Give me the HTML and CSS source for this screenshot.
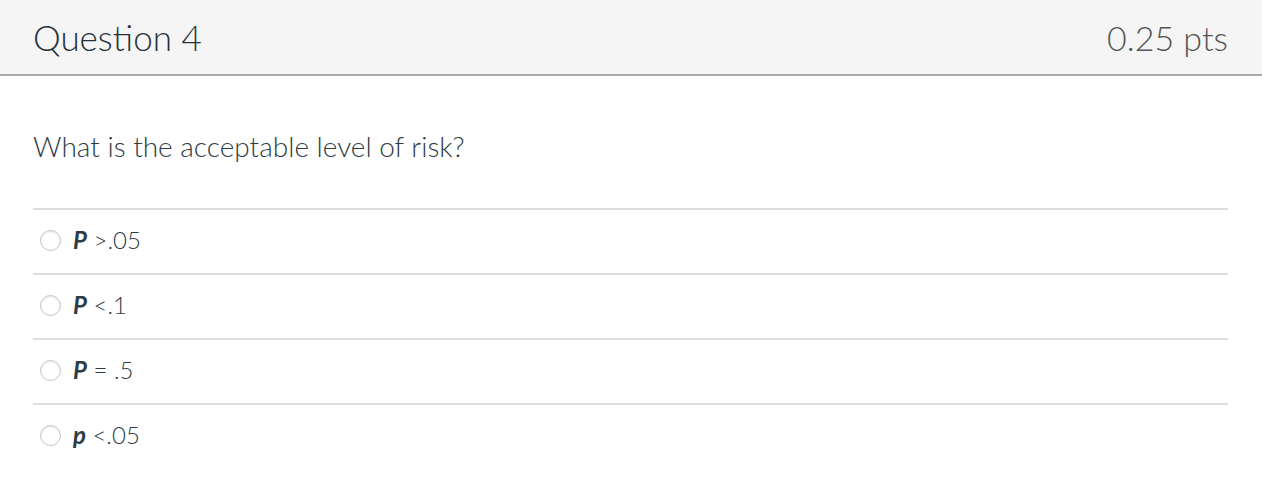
FILE: index.html
```html
<!DOCTYPE html>
<html>
<head>
    <title>Question 4</title>
    <link rel="stylesheet" href="styles.css">
</head>
<body>
    <div class="question">
        <div class="question-header">
            <span class="question-name">Question 4</span>
            <span class="points">0.25 pts</span>
        </div>
        <div class="question-text">What is the acceptable level of risk?</div>
        <div class="answers">
            <label class="answer">
                <span class="radio"></span>
                <span class="answer-text"><b><i>P</i></b> &gt;.05</span>
            </label>
            <label class="answer">
                <span class="radio"></span>
                <span class="answer-text"><b><i>P</i></b> &lt;.1</span>
            </label>
            <label class="answer">
                <span class="radio"></span>
                <span class="answer-text"><b><i>P</i></b> = .5</span>
            </label>
            <label class="answer">
                <span class="radio"></span>
                <span class="answer-text"><b><i>p</i></b> &lt;.05</span>
            </label>
        </div>
    </div>
</body>
</html>
```

FILE: styles.css
```css
body {
    margin: 0;
    background: #fff;
    font-family: "Lato Light", Lato, "Open Sans", sans-serif;
    font-weight: 300;
    color: #2d3b45;
}

.question-header {
    display: flex;
    align-items: center;
    justify-content: space-between;
    height: 74px;
    padding: 0 34px 0 33px;
    background-color: #f5f5f5;
    border-bottom: 2px solid #aaa;
}

.question-name {
    font-size: 35px;
    color: #25323b;
}

.points {
    font-size: 34px;
    color: #555;
}

.question-text {
    padding: 53px 33px 0;
    height: 79px;
    font-size: 28px;
}

.answers {
    margin: 0 34px 0 33px;
}

.answer {
    display: flex;
    align-items: center;
    height: 63px;
    border-top: 2px solid #ddd;
}

.radio {
    width: 19px;
    height: 19px;
    margin: 0 12px 3px 7px;
    border-radius: 50%;
    border: 1px solid #c4c4c4;
    box-shadow: inset 0 1px 2px rgba(0, 0, 0, 0.1);
    background: #fff;
}

.answer-text {
    font-size: 24px;
    margin-bottom: 4px;
}

.answer-text b {
    font-family: Lato, sans-serif;
    font-weight: 700;
}
```
